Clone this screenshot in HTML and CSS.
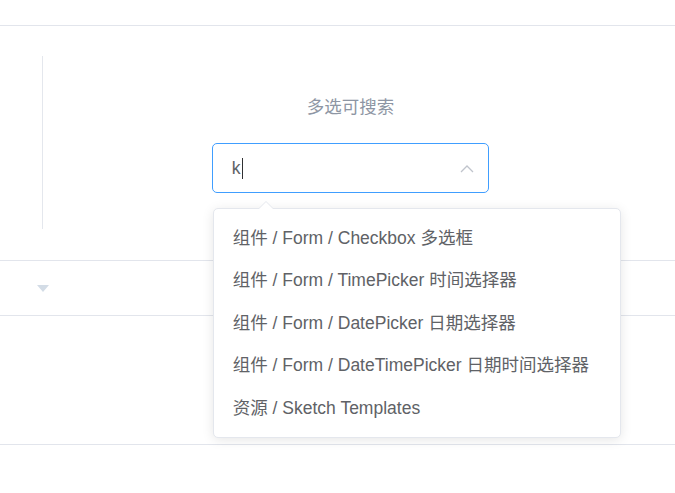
FILE: index.html
```html
<!DOCTYPE html>
<html lang="zh-CN">
<head>
<meta charset="utf-8">
<title>Cascader 多选可搜索</title>
<link rel="stylesheet" href="styles.css">
</head>
<body>
<div class="page">
  <div class="demo">
    <div class="source">
      <div class="row">
        <div class="block block-left"></div>
        <div class="block block-right">
          <span class="demonstration">多选可搜索</span>
          <div class="cascader">
            <span class="typed">k</span><span class="caret"></span>
            <svg class="chevron" width="14" height="9" viewBox="0 0 14 9"><polyline points="1,8 7,2 13,8" fill="none" stroke="#c0c4cc" stroke-width="1.3"/></svg>
          </div>
        </div>
      </div>
    </div>
    <div class="control"><span class="caret-down"></span></div>
  </div>
  <div class="next"></div>

  <div class="suggestion-panel">
    <span class="arrow"></span>
    <ul class="suggestion-list">
      <li class="item">组件 / Form / Checkbox 多选框</li>
      <li class="item">组件 / Form / TimePicker 时间选择器</li>
      <li class="item">组件 / Form / DatePicker 日期选择器</li>
      <li class="item">组件 / Form / DateTimePicker 日期时间选择器</li>
      <li class="item">资源 / Sketch Templates</li>
    </ul>
  </div>
</div>
</body>
</html>
```

FILE: styles.css
```css
html, body {
  margin: 0;
  padding: 0;
  background: #ffffff;
}
body {
  font-family: "Liberation Sans", "Noto Sans CJK SC", sans-serif;
  color: #606266;
}
.page {
  position: relative;
  width: 675px;
  height: 493px;
  overflow: hidden;
  padding-top: 25px;
  box-sizing: border-box;
}
.demo {
  border-top: 1px solid #e2e5ec;
}
.source {
  padding: 30px 0 31px;
  border-bottom: 1px solid #e2e5ec;
}
.row {
  display: flex;
}
.block {
  box-sizing: border-box;
}
.block-left {
  width: 43px;
  border-right: 1px solid #e4e7ed;
}
.block-right {
  flex: 0 0 615px;
  padding: 38px 0 36px;
  display: flex;
  flex-direction: column;
  align-items: center;
}
.demonstration {
  display: block;
  font-size: 17.5px;
  line-height: 26px;
  color: #8e96a4;
  margin-bottom: 23px;
}
.cascader {
  box-sizing: border-box;
  width: 277.5px;
  height: 50px;
  border: 1px solid #409eff;
  border-radius: 5px;
  display: flex;
  align-items: center;
  padding-left: 19px;
  background: #fff;
}
.typed {
  font-size: 17.5px;
  color: #606266;
  line-height: 22px;
}
.caret {
  display: inline-block;
  width: 1px;
  height: 21px;
  background: #303133;
  margin-left: 1px;
}
.chevron {
  margin-left: auto;
  margin-right: 14px;
  display: block;
}
.control {
  height: 54px;
  border-bottom: 1px solid #e2e5ec;
  display: flex;
  align-items: center;
  padding-left: 37px;
  box-sizing: content-box;
}
.caret-down {
  width: 0;
  height: 0;
  border-left: 6px solid transparent;
  border-right: 6px solid transparent;
  border-top: 7px solid #d3dce6;
}
.next {
  height: 128px;
  border-bottom: 1px solid #e2e5ec;
}
.suggestion-panel {
  position: absolute;
  left: 213px;
  top: 208px;
  width: 408px;
  box-sizing: border-box;
  border: 1px solid #e4e7ed;
  border-radius: 5px;
  background: #fff;
  box-shadow: 0 2px 12px 0 rgba(0, 0, 0, 0.1);
}
.arrow {
  position: absolute;
  left: 44px;
  top: -8.5px;
  width: 0;
  height: 0;
  border-left: 8px solid transparent;
  border-right: 8px solid transparent;
  border-bottom: 8px solid #e4e7ed;
}
.arrow::after {
  content: "";
  position: absolute;
  left: -7px;
  top: 1.2px;
  border-left: 7px solid transparent;
  border-right: 7px solid transparent;
  border-bottom: 7px solid #fff;
}
.suggestion-list {
  list-style: none;
  margin: 0;
  padding: 7.5px 0;
}
.item {
  height: 42.5px;
  line-height: 42.5px;
  padding: 0 18.75px;
  font-size: 17.5px;
  color: #606266;
  white-space: nowrap;
}
```
